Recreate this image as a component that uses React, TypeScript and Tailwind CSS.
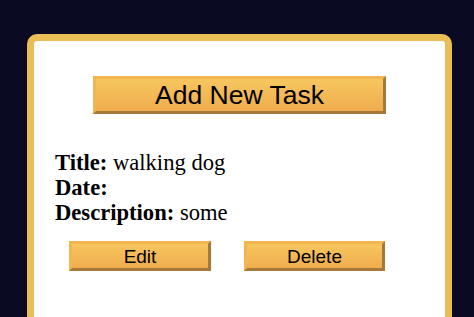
const btn =
  "border-[3px] border-t-[#f3b54e] border-l-[#f3b54e] border-r-[#a4793a] border-b-[#a4793a] bg-gradient-to-b from-[#f7c65e] to-[#efac4e] text-black font-['Liberation_Sans',Arial,sans-serif]";

type Task = {
  title: string;
  date: string;
  description: string;
};

const task: Task = { title: "walking dog", date: "", description: "some" };

export default function App() {
  return (
    <div className="h-[317px] w-[474px] overflow-hidden bg-[#0a0b23] pl-[27px] pt-[34px]">
      <div className="h-[320px] w-[425px] rounded-[10px] border-[7px] border-[#eabd55] bg-white pt-[35px]">
        <div className="flex justify-center">
          <button className={`${btn} h-[38px] w-[293px] text-[26.5px] leading-none`}>
            Add New Task
          </button>
        </div>

        <div className="mt-[36px] pl-[21px] font-['Liberation_Serif','Times_New_Roman',serif] text-[22.6px] leading-[25px] text-black">
          <div>
            <b>Title:</b> {task.title}
          </div>
          <div>
            <b>Date:</b> {task.date}
          </div>
          <div>
            <b>Description:</b> {task.description}
          </div>
        </div>

        <div className="mt-[16px] flex gap-[33px] pl-[35px]">
          <button className={`${btn} h-[30px] w-[142px] text-[19px] leading-none`}>Edit</button>
          <button className={`${btn} h-[30px] w-[141px] text-[19px] leading-none`}>Delete</button>
        </div>
      </div>
    </div>
  );
}
